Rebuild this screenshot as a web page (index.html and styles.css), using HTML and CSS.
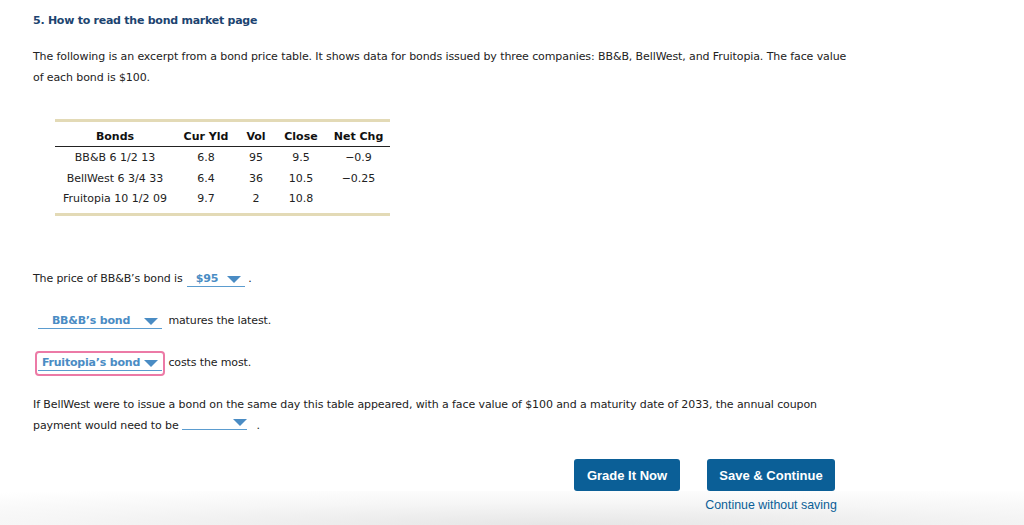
FILE: index.html
```html
<!DOCTYPE html>
<html>
<head>
<meta charset="utf-8">
<link rel="stylesheet" href="styles.css">
</head>
<body>
<div class="page">
  <div class="content">
    <h1 class="title">5. How to read the bond market page</h1>
    <p class="para">The following is an excerpt from a bond price table. It shows data for bonds issued by three companies: BB&amp;B, BellWest, and Fruitopia. The face value of each bond is $100.</p>

    <table class="bonds">
      <thead>
        <tr><th class="c-bond">Bonds</th><th class="c-yld">Cur Yld</th><th class="c-vol">Vol</th><th class="c-close">Close</th><th class="c-chg">Net Chg</th></tr>
      </thead>
      <tbody>
        <tr><td>BB&amp;B 6 1/2 13</td><td>6.8</td><td>95</td><td>9.5</td><td>−0.9</td></tr>
        <tr><td>BellWest 6 3/4 33</td><td>6.4</td><td>36</td><td>10.5</td><td>−0.25</td></tr>
        <tr class="last"><td>Fruitopia 10 1/2 09</td><td>9.7</td><td>2</td><td>10.8</td><td></td></tr>
      </tbody>
    </table>

    <div class="q q1">The price of BB&amp;B’s bond is <span class="dd dd-price"><span class="dd-text">$95</span><span class="arrow"></span></span> .</div>

    <div class="q q2"><span class="ddwrap"><span class="dd dd-wide"><span class="dd-text">BB&amp;B’s bond</span><span class="arrow"></span></span></span> matures the latest.</div>

    <div class="q q3"><span class="ddwrap focus"><span class="dd dd-wide"><span class="dd-text">Fruitopia’s bond</span><span class="arrow"></span></span></span> costs the most.</div>

    <p class="para q4">If BellWest were to issue a bond on the same day this table appeared, with a face value of $100 and a maturity date of 2033, the annual coupon payment would need to be<span class="dd dd-empty"><span class="dd-text"></span><span class="arrow"></span></span><span class="dot">.</span></p>
  </div>

  <div class="actions">
    <button class="btn">Grade It Now</button>
    <div class="save-col">
      <button class="btn btn-save">Save &amp; Continue</button>
      <a class="skip">Continue without saving</a>
    </div>
  </div>
</div>
</body>
</html>
```

FILE: styles.css
```css
html, body {
  margin: 0;
  padding: 0;
  background: #ffffff;
}
body {
  width: 1024px;
  height: 525px;
  overflow: hidden;
  font-family: "DejaVu Sans", Verdana, sans-serif;
  font-size: 11px;
  color: #222222;
}
.page {
  height: 525px;
  background-image: radial-gradient(ellipse 95% 40px at 55% 100%, #e6e6e6 0%, rgba(240,240,240,0.6) 55%, rgba(255,255,255,0) 100%);
  background-repeat: no-repeat;
  background-position: 0 100%;
  background-size: 100% 34px;
}
.content {
  padding: 14px 0 0 33px;
  width: 826px;
}
.title {
  margin: 0;
  font-size: 11px;
  line-height: 14px;
  font-weight: bold;
  letter-spacing: -0.25px;
  color: #1d4470;
}
.para {
  margin: 19px 0 0 0;
  line-height: 20.5px;
  letter-spacing: -0.1px;
}
.bonds {
  margin: 31px 0 0 22px;
  width: 335px;
  border-collapse: collapse;
  border-top: 3px solid #e3dab6;
  border-bottom: 3px solid #e3dab6;
}
.bonds th, .bonds td {
  text-align: center;
  padding: 0;
  font-size: 11px;
}
.bonds th {
  font-weight: bold;
  color: #111;
  line-height: 14px;
  padding: 8px 0 2px 0;
  border-bottom: 1px solid #222;
}
.bonds td {
  line-height: 21px;
}
.bonds tr.last td { line-height: 20px; padding-bottom: 4px; }
.c-bond { width: 120px; }
.c-yld { width: 62px; }
.c-vol { width: 38px; }
.c-close { width: 52px; }
.c-chg { width: 63px; }

.q {
  height: 20px;
  line-height: 20px;
  letter-spacing: -0.12px;
}
.q1 { margin-top: 53px; }
.q2 { margin-top: 20px; }
.q3 { margin-top: 22px; }
.q4 { margin-top: 24px; line-height: 20px; }

.dd {
  display: inline-flex;
  align-items: baseline;
  border-bottom: 1px solid #5b9ccf;
  line-height: 14px;
  padding-bottom: 0;
  letter-spacing: -0.2px;
}
.dd-text {
  flex: 1;
  text-align: center;
  font-weight: bold;
  color: #4a8cc4;
  min-height: 14px;
}
.arrow {
  align-self: center;
  width: 0;
  height: 0;
  border-left: 7px solid transparent;
  border-right: 7px solid transparent;
  border-top: 7px solid #4a8cc4;
  margin-right: 4px;
}
.dd-price { width: 58px; margin-left: 1px; }
.dd-wide { width: 124px; }
.dd-empty { width: 65px; margin-left: 3px; }
.dd-empty .arrow { margin-right: 0; }
.dot { margin-left: 10px; }

.ddwrap {
  display: inline-block;
  padding: 3px 1px 3px 1px;
  margin-left: 2px;
  border: 2px solid transparent;
  border-radius: 4px;
  line-height: 14px;
}
.ddwrap.focus {
  border-color: #ec7aa6;
}

.actions {
  display: flex;
  justify-content: flex-end;
  gap: 25px;
  padding-right: 187px;
  margin-top: 23px;
}
.btn {
  font-family: "Liberation Sans", Arial, sans-serif;
  font-size: 13px;
  font-weight: bold;
  color: #ffffff;
  background: #0b5f97;
  border: none;
  border-radius: 3px;
  height: 32px;
  width: 106px;
  padding: 0;
}
.btn-save { width: 128px; }
.save-col {
  display: flex;
  flex-direction: column;
  align-items: center;
  width: 132px;
}
.skip {
  font-family: "Liberation Sans", Arial, sans-serif;
  font-size: 12.4px;
  line-height: 14px;
  white-space: nowrap;
  color: #0b5f97;
  margin-top: 7px;
}
```
